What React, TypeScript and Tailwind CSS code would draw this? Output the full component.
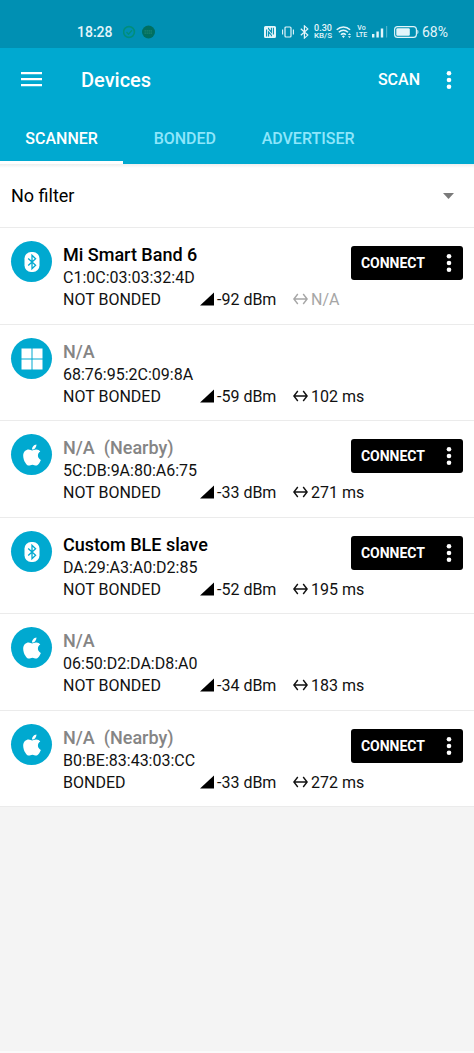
import React, { useState } from "react";
import { FaApple } from "react-icons/fa";

type Vendor = "bluetooth" | "windows" | "apple";

interface Device {
  name: string | null;
  nearby?: boolean;
  address: string;
  bonded: boolean;
  rssi: number;
  interval: number | null;
  connectable: boolean;
  vendor: Vendor;
}

const devices: Device[] = [
  { name: "Mi Smart Band 6", address: "C1:0C:03:03:32:4D", bonded: false, rssi: -92, interval: null, connectable: true, vendor: "bluetooth" },
  { name: null, address: "68:76:95:2C:09:8A", bonded: false, rssi: -59, interval: 102, connectable: false, vendor: "windows" },
  { name: null, nearby: true, address: "5C:DB:9A:80:A6:75", bonded: false, rssi: -33, interval: 271, connectable: true, vendor: "apple" },
  { name: "Custom BLE slave", address: "DA:29:A3:A0:D2:85", bonded: false, rssi: -52, interval: 195, connectable: true, vendor: "bluetooth" },
  { name: null, address: "06:50:D2:DA:D8:A0", bonded: false, rssi: -34, interval: 183, connectable: false, vendor: "apple" },
  { name: null, nearby: true, address: "B0:BE:83:43:03:CC", bonded: true, rssi: -33, interval: 272, connectable: true, vendor: "apple" },
];

const tabs = ["SCANNER", "BONDED", "ADVERTISER"];

function MoreIcon() {
  return (
    <svg width="6" height="20" viewBox="0 0 6 20" fill="currentColor" aria-hidden="true">
      <circle cx="3" cy="3.2" r="2.3" />
      <circle cx="3" cy="10" r="2.3" />
      <circle cx="3" cy="16.8" r="2.3" />
    </svg>
  );
}

function VendorIcon({ vendor }: { vendor: Vendor }) {
  if (vendor === "apple") return <FaApple className="size-6" aria-hidden="true" />;
  if (vendor === "windows") {
    return (
      <svg width="22" height="22" viewBox="0 0 22 22" fill="currentColor" aria-hidden="true">
        <path d="M.5.5h10v10H.5zM11.5.5h10v10h-10zM.5 11.5h10v10H.5zM11.5 11.5h10v10h-10z" />
      </svg>
    );
  }
  return (
    <svg width="16" height="20" viewBox="0 0 16 20" aria-hidden="true">
      <rect x="0.5" y="0" width="15" height="20" rx="6.5" fill="#fff" />
      <path d="M4.2 6.4l7.4 6.9L8 16.8V3.2l3.6 3.5-7.4 6.9" fill="none" stroke="#00a9d0" strokeWidth="1.3" />
    </svg>
  );
}

function StatusBar() {
  return (
    <div className="flex h-12 items-center bg-[#0090b3] pt-4 pr-[26px] pl-[77px] text-[#e3f5fa]">
      <span className="text-[14px] font-medium">18:28</span>
      <svg className="ml-[10px]" width="32" height="14" viewBox="0 0 32 14" aria-hidden="true">
        <circle cx="6" cy="7" r="5.4" fill="none" stroke="#008e7c" strokeWidth="1.6" />
        <path d="M3.5 7l2 2.2L9 5.2" fill="none" stroke="#008e7c" strokeWidth="1.3" />
        <circle cx="25.5" cy="7" r="6.5" fill="#006f60" />
        <path d="M21.5 5.8h8M21.5 8.2h8" stroke="#1d8571" strokeWidth="1.3" strokeDasharray="1.4 .6" />
      </svg>
      <div className="ml-auto flex items-center">
        <svg width="12" height="12" viewBox="0 0 12 12" aria-hidden="true">
          <path d="M1.5 0h9A1.5 1.5 0 0 1 12 1.5v9a1.5 1.5 0 0 1-1.5 1.5h-9A1.5 1.5 0 0 1 0 10.5v-9A1.5 1.5 0 0 1 1.5 0z" fill="currentColor" />
          <path d="M2.6 10.4V3.4M4.6 1.8v1l2.8 3.4V1.8M4.6 10.4V6l2.8 3.2v1M9.4 1.8v6.8" fill="none" stroke="#0090b3" strokeWidth="1.1" />
        </svg>
        <svg className="ml-[6px]" width="12" height="12" viewBox="0 0 12 12" fill="none" stroke="currentColor" aria-hidden="true">
          <rect x="3" y="1" width="6" height="10" rx="1" strokeWidth="1.2" />
          <path d="M.6 3.5v5M11.4 3.5v5" strokeWidth="1.1" />
        </svg>
        <svg className="ml-[6px]" width="9" height="14" viewBox="0 0 9 14" fill="none" stroke="currentColor" strokeWidth="1.2" aria-hidden="true">
          <path d="M.8 3.8l7 6.3-3.4 3V.9l3.4 3-7 6.3" />
        </svg>
        <div className="ml-1 w-[20px] text-center text-[9px] leading-[7px] font-medium">
          <div>0.30</div>
          <div className="text-[8px]">KB/S</div>
        </div>
        <svg className="ml-[3px]" width="16" height="14" viewBox="0 0 16 14" aria-hidden="true">
          <g fill="none" stroke="currentColor" strokeWidth="1.5">
            <path d="M.7 4.8c4-3.8 9.4-3.8 13.4 0" />
            <path d="M2.8 7.3c2.8-2.5 6.4-2.5 9.2 0" />
            <path d="M4.9 9.7c1.5-1.3 3.5-1.3 5 0" />
          </g>
          <path d="M5.9 11.2c.9-.8 2.1-.8 3 0L7.4 13zM13.5 8.2l1.6 1.9h-3.2zM13.5 13l1.6-1.8h-3.2z" fill="currentColor" />
        </svg>
        <div className="ml-1 w-[11px] text-center text-[7px] leading-[7px] font-medium">
          <div>Vo</div>
          <div>LTE</div>
        </div>
        <svg className="ml-[5px]" width="16" height="12" viewBox="0 0 16 12" fill="currentColor" aria-hidden="true">
          <path d="M0 8h2.4v3.5H0zM4.4 5.5h2.4v6H4.4zM8.8 2.5h2.4v9H8.8z" />
          <path d="M14 0h1.2v11.5H14z" opacity=".35" />
        </svg>
        <svg className="ml-[6px]" width="25" height="12" viewBox="0 0 25 12" aria-hidden="true">
          <rect x=".6" y=".6" width="21.8" height="10.8" rx="3" fill="none" stroke="currentColor" strokeWidth="1.1" />
          <rect x="2.3" y="2.3" width="13.5" height="7.4" rx="1.2" fill="currentColor" />
          <path d="M23.4 3.8c1.3.5 1.3 3.9 0 4.4z" fill="currentColor" />
        </svg>
        <span className="ml-[3px] text-[14px]">68%</span>
      </div>
    </div>
  );
}

function DeviceRow({ device }: { device: Device }) {
  return (
    <li className="flex min-h-[97px] items-start border-b border-[#ebebeb] bg-white pr-[11px] pl-[11px] even:min-h-24">
      <div className="mt-[13px] flex size-[41px] shrink-0 items-center justify-center rounded-full bg-[#00a9d0] text-white">
        <VendorIcon vendor={device.vendor} />
      </div>
      <div className="mt-[15px] ml-[11px] min-w-0 flex-1">
        <div className="flex items-start justify-between">
          <div>
            <h2 className={device.name ? "text-[18px] leading-6 font-medium text-black" : "text-[18px] leading-6 font-medium text-[#858585]"}>
              {device.name ?? "N/A"}
              {device.nearby && <span className="ml-[9px]">(Nearby)</span>}
            </h2>
            <p className="text-[16px] leading-[22px]">{device.address}</p>
          </div>
          {device.connectable && (
            <div className="mt-[3px] flex h-[34px] items-center rounded-[3px] bg-black text-white">
              <button type="button" className="h-full pr-[14px] pl-[10px] text-[14px] font-bold">
                CONNECT
              </button>
              <button type="button" aria-label="More actions" className="flex h-full items-center pr-[11px] pl-[7px]">
                <MoreIcon />
              </button>
            </div>
          )}
        </div>
        <div className="flex text-[16px] leading-[22px] whitespace-nowrap">
          <span className="w-[137px]">{device.bonded ? "BONDED" : "NOT BONDED"}</span>
          <span className="flex w-[93px] items-center gap-[3px]">
            <svg className="mb-[3px]" width="14" height="14" viewBox="0 0 14 14" aria-hidden="true">
              <path d="M14 .5v13H0z" fill="#000" />
            </svg>
            {device.rssi} dBm
          </span>
          <span className={device.interval === null ? "flex items-center gap-[3px] text-[#a6a6a6]" : "flex items-center gap-[3px]"}>
            <svg className="mb-[3px]" width="15" height="12" viewBox="0 0 15 12" fill="none" stroke="currentColor" strokeWidth="1.4" aria-hidden="true">
              <path d="M1 6h13M4.8 1L.9 6l3.9 5M10.2 1l3.9 5-3.9 5" />
            </svg>
            {device.interval === null ? "N/A" : `${device.interval} ms`}
          </span>
        </div>
      </div>
    </li>
  );
}

export default function App() {
  const [active, setActive] = useState(0);
  return (
    <div className="flex min-h-screen flex-col bg-[#f4f4f4] font-[Roboto,sans-serif] text-[#111]">
      <StatusBar />
      <header className="bg-[#00a9d0] text-white">
        <div className="flex h-16 items-center pr-[22px] pl-[21px]">
          <button type="button" aria-label="Open menu">
            <svg width="21" height="16" viewBox="0 0 21 16" fill="currentColor" aria-hidden="true">
              <path d="M0 0h21v2.2H0zM0 6h21v2.2H0zM0 12h21v2.2H0z" />
            </svg>
          </button>
          <h1 className="ml-[39px] text-[20px] font-medium">Devices</h1>
          <button type="button" className="ml-auto text-[16px] font-medium">
            SCAN
          </button>
          <button type="button" aria-label="More options" className="ml-[26px]">
            <MoreIcon />
          </button>
        </div>
        <nav className="flex h-[52px]" role="tablist">
          {tabs.map((tab, i) => (
            <button
              key={tab}
              type="button"
              role="tab"
              aria-selected={i === active}
              onClick={() => setActive(i)}
              className={
                i === active
                  ? "w-[26%] border-b-[3px] border-white pt-1 text-[16px] font-medium"
                  : "w-[26%] border-b-[3px] border-transparent pt-1 text-[16px] font-medium text-[#8ee6fb]"
              }
            >
              {tab}
            </button>
          ))}
        </nav>
      </header>
      <main className="flex-1">
        <div className="relative flex h-16 border-b border-[#ebebeb] bg-white bg-linear-to-b from-[#eeeeee] to-white to-[4px]">
          <select aria-label="Filter" className="w-full appearance-none bg-transparent px-[11px] text-[18px] text-black">
            <option>No filter</option>
          </select>
          <svg className="pointer-events-none absolute top-[29px] right-5" width="11" height="6" viewBox="0 0 11 6" aria-hidden="true">
            <path d="M0 0h11L5.5 6z" fill="#7a7a7a" />
          </svg>
        </div>
        <ul>
          {devices.map((device) => (
            <DeviceRow key={device.address} device={device} />
          ))}
        </ul>
      </main>
      <div className="h-[2px] bg-[#fafafa]" />
    </div>
  );
}
